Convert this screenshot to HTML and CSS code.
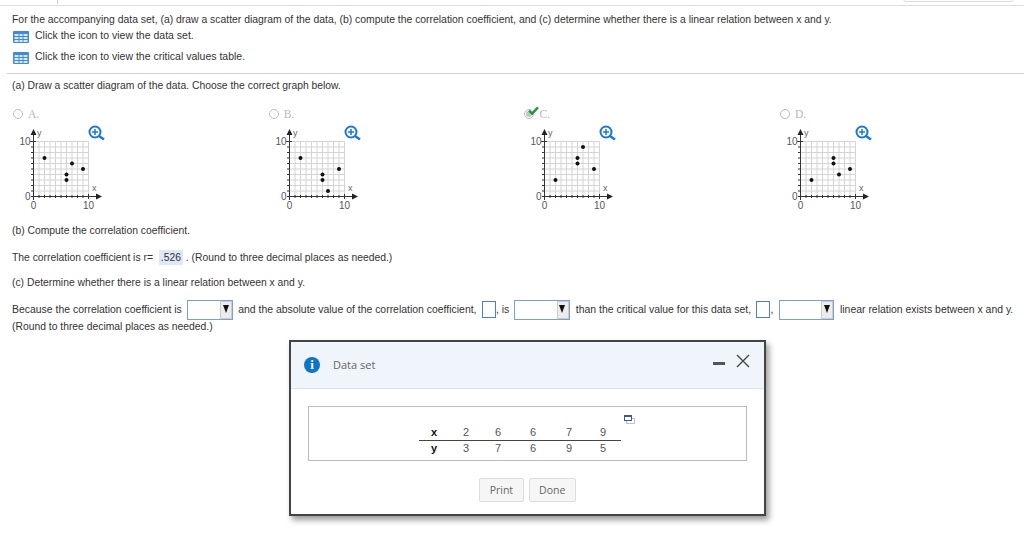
FILE: index.html

```html
<!DOCTYPE html>
<html lang="en">
<head>
    <meta charset="UTF-8">
    <meta name="viewport" content="width=device-width, initial-scale=1.0">
    <title>Data set question</title>
    <link rel="stylesheet" href="styles.css">
</head>
<body>
    <svg class="defs" width="0" height="0">
        <defs>
            <symbol id="tableIcon" viewBox="0 0 16 12">
                <rect width="16" height="12" rx="1" fill="#3f8ae0"/>
                <path d="M1.500 3h4v2h-4zM6.500 3h3v2h-3zM10.500 3h4v2h-4zM1.500 6h4v2h-4zM6.500 6h3v2h-3zM10.500 6h4v2h-4zM1.500 9h4v2h-4zM6.500 9h3v2h-3zM10.500 9h4v2h-4z" fill="#dbe9fa"/>
            </symbol>
            <symbol id="graphBase" viewBox="0 0 100 85">
                <path d="M29 16.500V71M34.500 16.500V71M40 16.500V71M45.500 16.500V71M51 16.500V71M56.500 16.500V71M62 16.500V71M67.500 16.500V71M73 16.500V71M78.500 16.500V71M23.500 22H78.500M23.500 27.500H78.500M23.500 33H78.500M23.500 38.500H78.500M23.500 44H78.500M23.500 49.500H78.500M23.500 55H78.500M23.500 60.500H78.500M23.500 66H78.500M23.500 16.500H78.500" stroke="#d4d4d4" fill="none"/>
                <path d="M23.500 8V75M21 71.500H90M20 16.500h6M21 22h2M21 27.500h2M21 33h2M21 38.500h2M21 44h2M21 49.500h2M21 55h2M21 60.500h2M21 66h2M29 70v3M34.500 70v3M40 70v3M45.500 70v3M51 70v3M56.500 70v3M62 70v3M67.500 70v3M73 70v3M78.500 69v5" stroke="#333" fill="none"/>
                <path d="M23.500 4l-3 6h6zM92 71.500l-6-3v6z" fill="#222"/>
                <text x="9.500" y="20" class="tick">10</text>
                <text x="15" y="75" class="tick">0</text>
                <text x="23.500" y="84" class="tick mid">0</text>
                <text x="78.500" y="84" class="tick mid">10</text>
                <text x="27" y="11" class="axis-name">y</text>
                <text x="82" y="65.500" class="axis-name">x</text>
                <circle cx="85" cy="7" r="5.500" fill="none" stroke="#1a78d6" stroke-width="2"/>
                <path d="M89 11l5 3.500" stroke="#1a78d6" stroke-width="2.500"/>
                <path d="M82 7h6M85 4v6" stroke="#1a78d6" stroke-width="1.500"/>
            </symbol>
        </defs>
    </svg>

    <div class="top-strip"><span class="top-tick"></span><span class="top-box"></span></div>

    <div class="question">
        <p class="intro">For the accompanying data set, (a) draw a scatter diagram of the data, (b) compute the correlation coefficient, and (c) determine whether there is a linear relation between x and y.</p>
        <p class="icon-row first"><svg class="table-icon"><use href="#tableIcon"/></svg>Click the icon to view the data set.</p>
        <p class="icon-row"><svg class="table-icon"><use href="#tableIcon"/></svg>Click the icon to view the critical values table.</p>
    </div>

    <div class="answers">
        <p class="part-a">(a) Draw a scatter diagram of the data. Choose the correct graph below.</p>

        <div class="options">
            <div class="option">
                <div class="option-label"><span class="radio"></span>A.</div>
                <svg class="graph" viewBox="0 0 100 85">
                    <use href="#graphBase"/>
                    <circle cx="34.500" cy="33" r="2"/><circle cx="56.500" cy="49.500" r="2"/><circle cx="56.500" cy="55" r="2"/><circle cx="62" cy="38.500" r="2"/><circle cx="73" cy="44" r="2"/>
                </svg>
            </div>
            <div class="option">
                <div class="option-label"><span class="radio"></span>B.</div>
                <svg class="graph" viewBox="0 0 100 85">
                    <use href="#graphBase"/>
                    <circle cx="34.500" cy="33" r="2"/><circle cx="56.500" cy="49.500" r="2"/><circle cx="56.500" cy="55" r="2"/><circle cx="62" cy="66" r="2"/><circle cx="73" cy="44" r="2"/>
                </svg>
            </div>
            <div class="option">
                <div class="option-label"><span class="radio selected"><svg class="check" viewBox="0 0 12 10"><path d="M1 5l3.500 3.500L11 1.500" fill="none" stroke="#1c9a3c" stroke-width="2.600"/></svg></span>C.</div>
                <svg class="graph" viewBox="0 0 100 85">
                    <use href="#graphBase"/>
                    <circle cx="34.500" cy="55" r="2"/><circle cx="56.500" cy="33" r="2"/><circle cx="56.500" cy="38.500" r="2"/><circle cx="62" cy="22" r="2"/><circle cx="73" cy="44" r="2"/>
                </svg>
            </div>
            <div class="option">
                <div class="option-label"><span class="radio"></span>D.</div>
                <svg class="graph" viewBox="0 0 100 85">
                    <use href="#graphBase"/>
                    <circle cx="34.500" cy="55" r="2"/><circle cx="56.500" cy="33" r="2"/><circle cx="56.500" cy="38.500" r="2"/><circle cx="62" cy="49.500" r="2"/><circle cx="73" cy="44" r="2"/>
                </svg>
            </div>
        </div>

        <p class="part-b">(b) Compute the correlation coefficient.</p>
        <p class="part-r">The correlation coefficient is r= <span class="filled">.526</span> . (Round to three decimal places as needed.)</p>
        <p class="part-c">(c) Determine whether there is a linear relation between x and y.</p>
        <p class="because">Because the correlation coefficient is <span class="drop"><span class="drop-btn"></span></span> and the absolute value of the correlation coefficient, <span class="blank"></span>, is <span class="drop wide"><span class="drop-btn"></span></span> than the critical value for this data set, <span class="blank"></span>, <span class="drop wide"><span class="drop-btn"></span></span> linear relation exists between x and y.</p>
        <p class="round-note">(Round to three decimal places as needed.)</p>
    </div>

    <div class="dialog">
        <div class="dialog-header">
            <span class="info-icon">i</span>
            <span class="dialog-title">Data set</span>
            <span class="dialog-min"></span>
            <svg class="dialog-close" viewBox="0 0 14 14"><path d="M1 1l12 12M13 1L1 13" stroke="#444" stroke-width="1.400" fill="none"/></svg>
        </div>
        <div class="dialog-body">
            <div class="data-box">
                <svg class="copy-icon" viewBox="0 0 11 9"><rect x="2.500" y="3.500" width="8" height="5" fill="#fff" stroke="#b9c2dc"/><rect x="0.500" y="0.500" width="7" height="5" fill="#fff" stroke="#3d55a5"/><path d="M0 1h8" stroke="#3d55a5" stroke-width="2"/></svg>
                <table class="data-table">
                    <tr class="row-x"><th>x</th><td>2</td><td>6</td><td>6</td><td>7</td><td>9</td></tr>
                    <tr><th>y</th><td>3</td><td>7</td><td>6</td><td>9</td><td>5</td></tr>
                </table>
            </div>
            <div class="dialog-buttons">
                <button class="btn">Print</button>
                <button class="btn">Done</button>
            </div>
        </div>
    </div>
</body>
</html>
```

FILE: styles.css

```css
* {
    margin: 0;
    padding: 0;
    box-sizing: border-box;
}

body {
    font-family: 'Liberation Sans', Arial, sans-serif;
    font-size: 10.35px;
    line-height: 12px;
    color: #333;
    background: white;
    height: 543px;
    overflow: hidden;
    position: relative;
}

.defs {
    position: absolute;
}

.top-strip {
    height: 6px;
    border-bottom: 1px solid #dcdce4;
    position: relative;
}

.top-tick {
    position: absolute;
    left: 57px;
    top: 0;
    width: 1px;
    height: 4px;
    background: #ccc;
}

.top-box {
    position: absolute;
    left: 903px;
    top: -6px;
    width: 111px;
    height: 8px;
    border: 1px solid #ddd;
    border-radius: 3px;
}

.question {
    margin-left: 7px;
    padding: 8px 0 0 5px;
    height: 68px;
    border-bottom: 1px solid #d0d0d6;
}

.intro {
    white-space: nowrap;
    font-size: 10.4px;
}

.icon-row {
    display: flex;
    align-items: center;
    height: 16px;
    margin-top: 6px;
    font-size: 10.5px;
}

.icon-row.first {
    margin-top: 0;
    padding-top: 1px;
}

.table-icon {
    width: 16px;
    height: 12px;
    margin: 4px 6px 0 1px;
}

.answers {
    padding-left: 12px;
}

.part-a {
    margin-top: 6px;
}

.options {
    display: grid;
    grid-template-columns: repeat(4, 255.7px);
    margin: 16px 0 0 1px;
    height: 115px;
}

.option-label {
    display: flex;
    align-items: center;
    gap: 5px;
    height: 12px;
    font-family: 'Liberation Serif', serif;
    font-size: 11.5px;
    color: #b8b8b8;
}

.radio {
    width: 10px;
    height: 10px;
    border: 1px solid #bbb;
    border-radius: 50%;
    position: relative;
}

.radio.selected::before {
    content: "";
    position: absolute;
    left: 1px;
    top: 1px;
    width: 6px;
    height: 6px;
    border-radius: 50%;
    background: #c4c4c4;
}

.check {
    position: absolute;
    left: 3px;
    top: -4px;
    width: 11px;
    height: 9px;
}

.graph {
    display: block;
    width: 100px;
    height: 85px;
    margin: 5px 0 0 -3px;
}

.graph circle {
    fill: #111;
}

.tick {
    font-family: 'Liberation Sans', Arial, sans-serif;
    font-size: 10px;
    fill: #556;
}

.tick.mid {
    text-anchor: middle;
}

.axis-name {
    font-family: 'Liberation Sans', Arial, sans-serif;
    font-size: 9px;
    fill: #666;
}

.part-b {
    margin-top: 2px;
}

.part-r {
    margin-top: 13px;
}

.filled {
    display: inline-block;
    height: 15px;
    line-height: 15px;
    margin-left: 3px;
    padding: 0 2px;
    background: #dfe8f6;
}

.part-c {
    margin-top: 12px;
}

.because {
    margin-top: 11px;
    white-space: nowrap;
    height: 20px;
    line-height: 19px;
    font-size: 10.45px;
}

.drop {
    display: inline-block;
    width: 46px;
    height: 20px;
    margin: 0 2.3px;
    border: 1px solid #7a9fe0;
    vertical-align: top;
    position: relative;
    background: white;
}

.drop.wide {
    width: 55.5px;
    margin-right: 3px;
}

.drop-btn {
    position: absolute;
    right: 0;
    top: 0;
    bottom: 0;
    width: 12px;
    background: #ececec;
    border: 1px solid #ccc;
}

.drop-btn::after {
    content: "";
    position: absolute;
    left: 1.500px;
    top: 3px;
    border-left: 3.500px solid transparent;
    border-right: 3.500px solid transparent;
    border-top: 8px solid #111;
}

.blank {
    display: inline-block;
    width: 14px;
    height: 17px;
    margin: 1px 0 0 2.5px;
    border: 1px solid #4a7fd4;
    vertical-align: top;
}

.round-note {
    margin-top: 1px;
}

.dialog {
    position: absolute;
    left: 289px;
    top: 340px;
    width: 477px;
    height: 176px;
    background: white;
    border: 2px solid #444;
    box-shadow: 3px 4px 6px rgba(0, 0, 0, 0.4);
    display: flex;
    flex-direction: column;
}

.dialog-header {
    height: 47px;
    background: #f0f5fc;
    border-bottom: 1px solid #d3e4f3;
    display: flex;
    align-items: center;
    padding-left: 13px;
    color: #666;
}

.info-icon {
    width: 16px;
    height: 16px;
    border-radius: 50%;
    background: #0f75c9;
    color: white;
    font-family: 'Liberation Serif', serif;
    font-weight: bold;
    font-size: 13px;
    line-height: 16px;
    text-align: center;
}

.dialog-title {
    margin-left: 13px;
    flex: 1;
    font-family: 'Open Sans', sans-serif;
    font-size: 11px;
}

.dialog-min {
    width: 12px;
    height: 3px;
    background: #555;
    margin: 0 11px 4px 0;
}

.dialog-close {
    width: 14px;
    height: 14px;
    margin: 0 14px 9px 0;
}

.dialog-body {
    flex: 1;
    padding: 17px 17px 0;
}

.data-box {
    height: 55px;
    border: 1px solid #bbb;
    position: relative;
    padding: 18px 0 0 110px;
}

.copy-icon {
    position: absolute;
    left: 315px;
    top: 8px;
    width: 11px;
    height: 9px;
}

.data-table {
    border-collapse: collapse;
    table-layout: fixed;
    width: 202px;
    color: #555;
    font-size: 11px;
}

.data-table th {
    width: 30px;
    color: #111;
    height: 15px;
}

.data-table td {
    height: 15px;
    text-align: center;
}

/* column widths follow the uneven spacing of the values */
.data-table td:nth-child(2) { width: 34px; }
.data-table td:nth-child(3) { width: 30px; }
.data-table td:nth-child(4) { width: 40px; }
.data-table td:nth-child(5) { width: 32px; }
.data-table td:nth-child(6) { width: 36px; }

.row-x th,
.row-x td {
    border-bottom: 1px solid #444;
}

.dialog-buttons {
    display: flex;
    justify-content: center;
    gap: 5px;
    margin-top: 17px;
}

.btn {
    height: 24px;
    padding: 0 9.500px;
    font-family: 'Open Sans', sans-serif;
    font-size: 10.5px;
    color: #666;
    background: #f6f6f6;
    border: 1px solid #ddd;
    border-radius: 2px;
}
```
